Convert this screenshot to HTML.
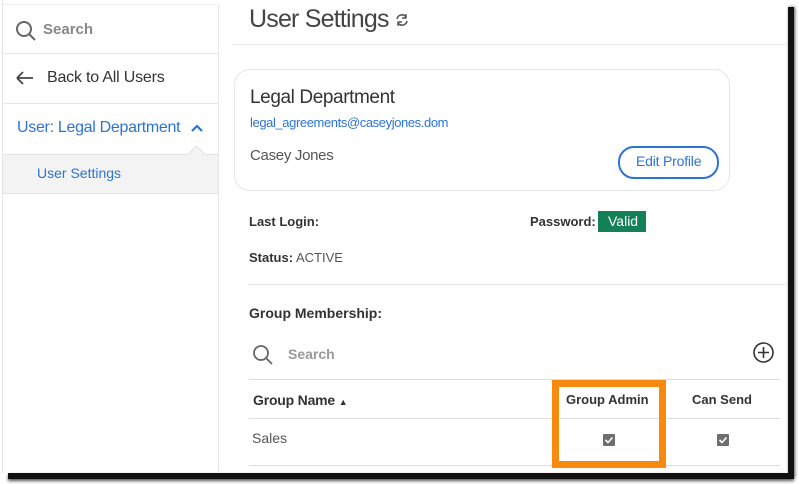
<!DOCTYPE html>
<html><head><style>
body{margin:0;width:799px;height:484px;background:#fff;position:relative;overflow:hidden;font-family:"Liberation Sans",sans-serif;}
.a{position:absolute;}
.t{position:absolute;white-space:nowrap;}
</style></head><body>
<div class="a" style="left:2px;top:0;width:786px;height:473px;border-left:1px solid #e4e4e4;background:#fff;"></div>
<div class="a" style="left:788px;top:7px;width:6px;height:470px;background:#111;box-shadow:1px 0 3px #555;"></div>
<div class="a" style="left:8px;top:473px;width:786px;height:6px;background:#111;box-shadow:0 2px 3px #555;"></div>
<!-- sidebar -->
<div class="a" style="left:218px;top:4px;width:1px;height:469px;background:#e6e6e6;"></div>
<div class="a" style="left:3px;top:4px;width:215px;height:1px;background:#eee;"></div>
<svg class="a" style="left:15px;top:20px" width="22" height="22"><circle cx="9" cy="9" r="7" fill="none" stroke="#666" stroke-width="2"/><line x1="14" y1="14" x2="20" y2="20" stroke="#666" stroke-width="2"/></svg>
<div class="t" style="left:43px;top:21px;font-size:15px;color:#888;font-weight:bold">Search</div>
<div class="a" style="left:3px;top:53px;width:215px;height:1px;background:#e6e6e6;"></div>
<svg class="a" style="left:15px;top:70px" width="20" height="16"><path d="M2 8H18M2 8L8 2M2 8L8 14" fill="none" stroke="#444" stroke-width="1.8"/></svg>
<div class="t" style="left:47px;top:69px;font-size:16px;color:#333;letter-spacing:-0.2px">Back to All Users</div>
<div class="a" style="left:3px;top:103px;width:215px;height:1px;background:#e6e6e6;"></div>
<div class="t" style="left:17px;top:119px;font-size:16px;color:#2c74d1;letter-spacing:-0.3px">User: Legal Department</div>
<svg class="a" style="left:190px;top:123px" width="14" height="10"><path d="M2 8L7 3L12 8" fill="none" stroke="#2c74d1" stroke-width="2.2"/></svg>
<div class="a" style="left:3px;top:154px;width:215px;height:38px;background:#f3f3f3;border-top:1px solid #e3e3e3;border-bottom:1px solid #e3e3e3;"></div>
<div class="a" style="left:190px;top:148px;width:12px;height:12px;background:#f3f3f3;transform:rotate(45deg);border-left:1px solid #e3e3e3;border-top:1px solid #e3e3e3;"></div>
<div class="t" style="left:37px;top:165px;font-size:14px;color:#2c74d1">User Settings</div>
<!-- main -->
<div class="t" style="left:249px;top:5px;font-size:25px;color:#444;letter-spacing:-0.8px">User Settings</div>
<svg class="a" style="left:394px;top:12px" width="16" height="16"><path d="M3 7A5 5 0 0 1 12 5M13 9A5 5 0 0 1 4 11" fill="none" stroke="#555" stroke-width="1.6"/><path d="M12 2V6H8" fill="none" stroke="#555" stroke-width="1.4"/><path d="M4 14V10H8" fill="none" stroke="#555" stroke-width="1.4"/></svg>
<div class="a" style="left:233px;top:44px;width:555px;height:1px;background:#e8e8e8;"></div>
<div class="a" style="left:234px;top:69px;width:494px;height:120px;border:1px solid #e6e6e6;border-radius:16px;"></div>
<div class="t" style="left:250px;top:87px;font-size:19px;color:#333;letter-spacing:-0.4px">Legal Department</div>
<div class="t" style="left:250px;top:115px;font-size:13px;color:#2c74d1;letter-spacing:-0.4px">legal_agreements@caseyjones.dom</div>
<div class="t" style="left:250px;top:147px;font-size:15px;color:#555;letter-spacing:-0.3px">Casey Jones</div>
<div class="a" style="left:618px;top:146px;width:97px;height:29px;border:2px solid #2c74d1;border-radius:16px;"></div>
<div class="t" style="left:636px;top:153px;font-size:14px;color:#2c74d1;letter-spacing:-0.2px">Edit Profile</div>
<div class="t" style="left:249px;top:214px;font-size:13px;color:#333;font-weight:bold">Last Login:</div>
<div class="t" style="left:530px;top:214px;font-size:13px;color:#333;font-weight:bold">Password:</div>
<div class="a" style="left:598px;top:211px;width:48px;height:21px;background:#148058;"></div>
<div class="t" style="left:608px;top:213px;font-size:14px;color:#fff">Valid</div>
<div class="t" style="left:249px;top:250px;font-size:13px;color:#333"><b>Status:</b> <span style="color:#555">ACTIVE</span></div>
<div class="a" style="left:248px;top:284px;width:540px;height:1px;background:#e6e6e6;"></div>
<div class="t" style="left:249px;top:305px;font-size:14px;color:#333;font-weight:bold">Group Membership:</div>
<svg class="a" style="left:252px;top:344px" width="22" height="22"><circle cx="9" cy="9" r="7" fill="none" stroke="#666" stroke-width="1.8"/><line x1="14" y1="14" x2="20" y2="20" stroke="#666" stroke-width="1.8"/></svg>
<div class="t" style="left:288px;top:346px;font-size:14px;color:#999;font-weight:bold">Search</div>
<svg class="a" style="left:752px;top:341px" width="23" height="23"><circle cx="11.5" cy="11.5" r="9.5" fill="none" stroke="#333" stroke-width="1.6"/><path d="M11.5 6V17M6 11.5H17" stroke="#333" stroke-width="1.6"/></svg>
<div class="a" style="left:249px;top:379px;width:531px;height:1px;background:#ddd;"></div>
<div class="t" style="left:253px;top:392px;font-size:14px;color:#333;font-weight:bold;letter-spacing:-0.2px">Group Name <span style="font-size:9px">▲</span></div>
<div class="t" style="left:566px;top:392px;font-size:13px;color:#333;font-weight:bold">Group Admin</div>
<div class="t" style="left:692px;top:392px;font-size:13px;color:#333;font-weight:bold">Can Send</div>
<div class="a" style="left:249px;top:418px;width:531px;height:1px;background:#ddd;"></div>
<div class="t" style="left:252px;top:430px;font-size:14px;color:#555">Sales</div>
<svg class="a" style="left:603px;top:434px" width="12" height="12"><rect width="12" height="12" rx="1" fill="#6e6e6e"/><path d="M2.5 6L5 8.5L9.5 3.5" fill="none" stroke="#fff" stroke-width="1.6"/></svg>
<svg class="a" style="left:717px;top:434px" width="12" height="12"><rect width="12" height="12" rx="1" fill="#6e6e6e"/><path d="M2.5 6L5 8.5L9.5 3.5" fill="none" stroke="#fff" stroke-width="1.6"/></svg>
<div class="a" style="left:249px;top:465px;width:531px;height:1px;background:#ddd;"></div>
<div class="a" style="left:552px;top:380px;width:100px;height:74px;border:7px solid #f7890f;"></div>
</body></html>
